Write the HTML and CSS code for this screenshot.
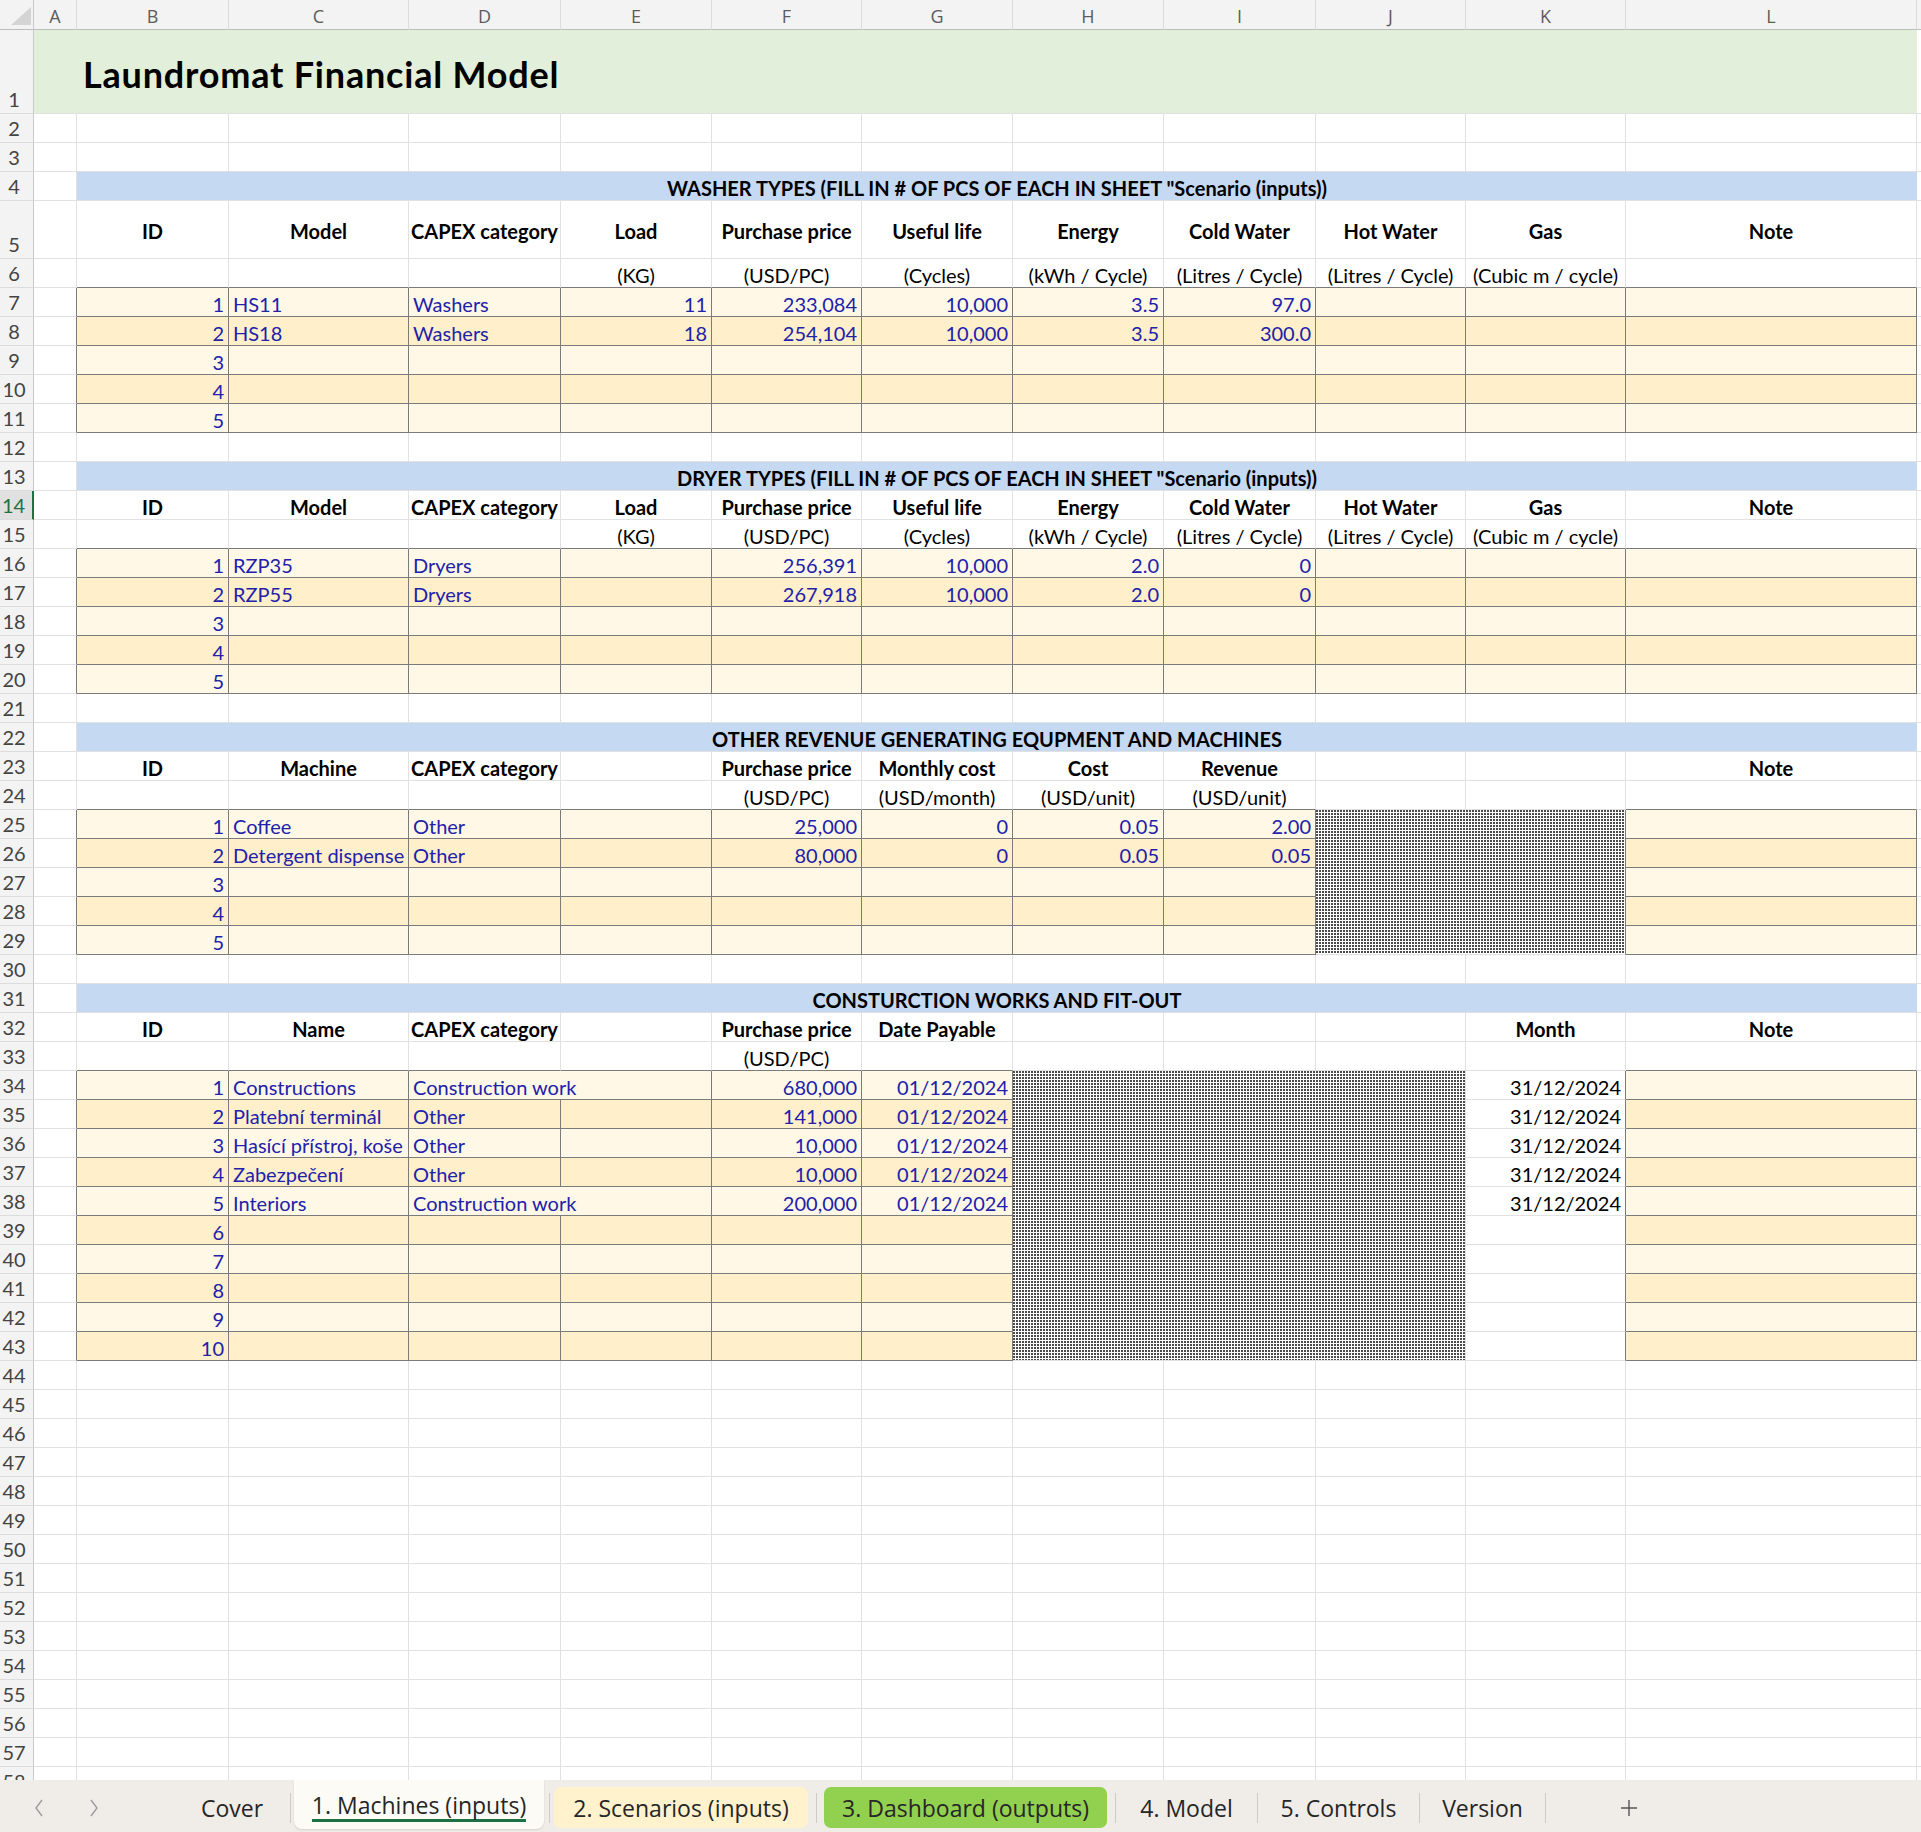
FILE: index.html
```html
<!DOCTYPE html>
<html lang="en">
<head>
    <meta charset="UTF-8">
    <meta name="viewport" content="width=device-width, initial-scale=1.0">
    <title>Laundromat Financial Model</title>
    <link rel="stylesheet" href="styles.css">
</head>
<body>
    <div class="window">
        <div class="sheet-wrap">
            <div class="sheet" id="sheet"></div>
        </div>

        <div class="tabbar">
            <div class="nav">
                <svg width="12" height="20" viewBox="0 0 12 20"><polyline points="9,2 3,10 9,18" fill="none" stroke="#9c9c9c" stroke-width="1.4"/></svg>
                <svg width="12" height="20" viewBox="0 0 12 20"><polyline points="3,2 9,10 3,18" fill="none" stroke="#9c9c9c" stroke-width="1.4"/></svg>
            </div>
            <div class="tab tab-cover">Cover</div>
            <span class="sep"></span>
            <div class="tab tab-active"><span>1. Machines (inputs)</span></div>
            <span class="sep"></span>
            <div class="tab tab-yellow">2. Scenarios (inputs)</div>
            <span class="sep"></span>
            <div class="tab tab-green">3. Dashboard (outputs)</div>
            <span class="sep"></span>
            <div class="tab tab-model">4. Model</div>
            <span class="sep"></span>
            <div class="tab tab-controls">5. Controls</div>
            <span class="sep"></span>
            <div class="tab tab-version">Version</div>
            <span class="sep"></span>
            <div class="add">
                <svg width="20" height="20" viewBox="0 0 20 20"><path d="M10 2v16M2 10h16" stroke="#555" stroke-width="1.4"/></svg>
            </div>
        </div>
    </div>

    <script>
        const COLS = ['A', 'B', 'C', 'D', 'E', 'F', 'G', 'H', 'I', 'J', 'K', 'L'];
        const LAST_ROW = 58;
        const RIGHT = [1, 4, 5, 6, 7, 8, 9, 10];
        const rows = {};

        for (let r = 1; r <= LAST_ROW; r++) {
            rows[r] = COLS.map(() => ({ t: '', c: [] }));
        }

        function title(r, text) {
            rows[r][0] = { t: text, c: ['title', 's12'] };
            for (let i = 1; i < 12; i++) rows[r][i] = null;
        }

        function band(r, text) {
            rows[r][1] = { t: text, c: ['band', 's11'] };
            for (let i = 2; i < 12; i++) rows[r][i] = null;
        }

        function line(r, vals, cls) {
            vals.forEach((v, i) => {
                const cell = rows[r][i + 1];
                if (cell && v) {
                    cell.t = v;
                    cell.c.push(cls);
                }
            });
        }

        function fill(r, vals) {
            vals.forEach((v, i) => {
                const cell = rows[r][i + 1];
                if (cell && v) cell.t = v;
            });
        }

        function block(r, i, w, h, extra) {
            rows[r][i] = { t: '', c: ['hatch', 's' + w, 'rs' + h].concat(extra || []) };
            for (let y = r; y < r + h; y++) {
                for (let x = i; x < i + w; x++) {
                    if (y !== r || x !== i) rows[y][x] = null;
                }
            }
        }

        function table(r1, r2, cols) {
            cols.forEach(i => rows[r1 - 1][i] && rows[r1 - 1][i].c.push('bb'));
            for (let r = r1; r <= r2; r++) {
                rows[r][0].c.push('br');
                cols.forEach(i => {
                    const cell = rows[r][i];
                    if (!cell) return;
                    cell.c.push('br', 'bb', 'in', (r - r1) % 2 ? 'dark' : 'light');
                    if (RIGHT.includes(i)) cell.c.push('r');
                });
            }
        }

        const machineHeads = ['ID', 'Model', 'CAPEX category', 'Load', 'Purchase price', 'Useful life', 'Energy', 'Cold Water', 'Hot Water', 'Gas', 'Note'];
        const machineUnits = ['', '', '', '(KG)', '(USD/PC)', '(Cycles)', '(kWh / Cycle)', '(Litres / Cycle)', '(Litres / Cycle)', '(Cubic m / cycle)', ''];
        const all = [1, 2, 3, 4, 5, 6, 7, 8, 9, 10, 11];

        title(1, 'Laundromat Financial Model');

        // Washers
        band(4, 'WASHER TYPES (FILL IN # OF PCS OF EACH IN SHEET "Scenario (inputs))');
        line(5, machineHeads, 'hd');
        line(6, machineUnits, 'un');
        fill(7, ['1', 'HS11', 'Washers', '11', '233,084', '10,000', '3.5', '97.0']);
        fill(8, ['2', 'HS18', 'Washers', '18', '254,104', '10,000', '3.5', '300.0']);
        fill(9, ['3']);
        fill(10, ['4']);
        fill(11, ['5']);
        table(7, 11, all);

        // Dryers
        band(13, 'DRYER TYPES (FILL IN # OF PCS OF EACH IN SHEET "Scenario (inputs))');
        line(14, machineHeads, 'hd');
        line(15, machineUnits, 'un');
        fill(16, ['1', 'RZP35', 'Dryers', '', '256,391', '10,000', '2.0', '0']);
        fill(17, ['2', 'RZP55', 'Dryers', '', '267,918', '10,000', '2.0', '0']);
        fill(18, ['3']);
        fill(19, ['4']);
        fill(20, ['5']);
        table(16, 20, all);

        // Other equipment
        band(22, 'OTHER REVENUE GENERATING EQUPMENT AND MACHINES');
        line(23, ['ID', 'Machine', 'CAPEX category', '', 'Purchase price', 'Monthly cost', 'Cost', 'Revenue', '', '', 'Note'], 'hd');
        line(24, ['', '', '', '', '(USD/PC)', '(USD/month)', '(USD/unit)', '(USD/unit)'], 'un');
        block(25, 9, 2, 5, ['br']);
        fill(25, ['1', 'Coffee', 'Other', '', '25,000', '0', '0.05', '2.00']);
        fill(26, ['2', 'Detergent dispense', 'Other', '', '80,000', '0', '0.05', '0.05']);
        fill(27, ['3']);
        fill(28, ['4']);
        fill(29, ['5']);
        table(25, 29, [1, 2, 3, 4, 5, 6, 7, 8, 11]);

        // Construction
        band(31, 'CONSTURCTION WORKS AND FIT-OUT');
        line(32, ['ID', 'Name', 'CAPEX category', '', 'Purchase price', 'Date Payable', '', '', '', 'Month', 'Note'], 'hd');
        line(33, ['', '', '', '', '(USD/PC)'], 'un');
        block(34, 7, 3, 10);
        [34, 38].forEach(r => {
            rows[r][3].c.push('s2');
            rows[r][4] = null;
        });
        const works = [
            ['1', 'Constructions', 'Construction work', '', '680,000', '01/12/2024'],
            ['2', 'Platební terminál', 'Other', '', '141,000', '01/12/2024'],
            ['3', 'Hasící přístroj, koše', 'Other', '', '10,000', '01/12/2024'],
            ['4', 'Zabezpečení', 'Other', '', '10,000', '01/12/2024'],
            ['5', 'Interiors', 'Construction work', '', '200,000', '01/12/2024']
        ];
        for (let r = 34; r <= 43; r++) {
            const w = works[r - 34] || [String(r - 33)];
            fill(r, w);
            const month = rows[r][10];
            month.c.push('br', 'r');
            if (r <= 38) month.t = '31/12/2024';
        }
        table(34, 43, [1, 2, 3, 4, 5, 6, 11]);

        // Build the grid
        const sheet = document.getElementById('sheet');

        function add(cls, text) {
            const d = document.createElement('div');
            d.className = cls;
            if (text) d.textContent = text;
            sheet.appendChild(d);
            return d;
        }

        add('corner').innerHTML = '<svg width="34" height="30"><polygon points="31,7 31,25 11,25" fill="#d4d4d4"/></svg>';
        COLS.forEach(c => add('colhead', c));
        add('colhead edge');

        for (let r = 1; r <= LAST_ROW; r++) {
            add('rowhead' + (r === 14 ? ' sel' : ''), String(r));
            rows[r].forEach(cell => {
                if (cell) add('c ' + cell.c.join(' '), cell.t);
            });
            add('c edge');
        }
    </script>
</body>
</html>
```

FILE: styles.css
```css
:root {
    --grid-line: #e1e1e1;
    --table-line: #7b7b7b;
    --input-blue: #2121aa;
    --cream: #fff8e7;
    --cream-dark: #ffefca;
    --band: #c6d9f2;
    --title-green: #e2efda;
}

* {
    box-sizing: border-box;
}

body {
    margin: 0;
    background: #fff;
    font-family: Lato, "Liberation Sans", sans-serif;
    overflow: hidden;
}

.window {
    width: 1921px;
    height: 1832px;
    display: flex;
    flex-direction: column;
}

.sheet-wrap {
    height: 1780px;
    overflow: hidden;
    flex-shrink: 0;
}

.sheet {
    display: grid;
    grid-template-columns: 34px 43px 152px 180px 152px 151px 150px 151px 151px 152px 150px 160px 291px 4px;
    grid-template-rows: 30px 84px 29px 29px 29px 58px;
    grid-auto-rows: 29px;
}

/* headers */

.corner {
    background: #f3f3f3;
    border-right: 1px solid #c9c9c9;
    border-bottom: 1px solid #bdbdbd;
}

.corner svg {
    display: block;
}

.colhead {
    background: #f3f3f3;
    border-right: 1px solid #dcdcdc;
    border-bottom: 1px solid #bdbdbd;
    color: #5c5c5c;
    font-family: "Open Sans", sans-serif;
    font-size: 18px;
    display: flex;
    align-items: center;
    justify-content: center;
    padding-top: 2px;
}

.colhead.edge {
    border-right: 0;
}

.rowhead {
    background: #f3f3f3;
    border-right: 1px solid #c9c9c9;
    border-bottom: 1px solid #dcdcdc;
    color: #444;
    font-size: 20px;
    display: flex;
    align-items: flex-end;
    justify-content: center;
    padding: 0 5px 2px 0;
    white-space: nowrap;
}

.rowhead.sel {
    background: #e0e0e0;
    color: #1e7145;
    border-right: 2px solid #1e7145;
}

/* cells */

.c {
    border-right: 1px solid var(--grid-line);
    border-bottom: 1px solid var(--grid-line);
    display: flex;
    align-items: center;
    padding: 3px 4px 0;
    font-size: 20px;
    color: #000;
    white-space: nowrap;
    overflow: hidden;
    min-width: 0;
}

.c.edge {
    border-right: 0;
}

.c.br {
    border-right-color: var(--table-line);
}

.c.bb {
    border-bottom-color: var(--table-line);
}

.c.in {
    color: var(--input-blue);
}

.c.light {
    background: var(--cream);
}

.c.dark {
    background: var(--cream-dark);
}

.c.r {
    justify-content: flex-end;
}

.hd {
    font-weight: 700;
    justify-content: center;
}

.un {
    justify-content: center;
}

.title {
    background: var(--title-green);
    font-size: 36px;
    font-weight: 700;
    letter-spacing: 0.8px;
    padding: 5px 0 0 49px;
    border-right: 0;
}

.band {
    background: var(--band);
    font-weight: 700;
    justify-content: center;
    border-right: 0;
}

.hatch {
    background-color: #fff;
    background-image: conic-gradient(at 2px 2px, transparent 75%, #4a4a4a 0);
    background-size: 3px 3px;
}

.s2 { grid-column: span 2; }
.s3 { grid-column: span 3; }
.s11 { grid-column: span 11; }
.s12 { grid-column: span 12; }
.rs5 { grid-row: span 5; }
.rs10 { grid-row: span 10; }

/* sheet tabs */

.tabbar {
    height: 52px;
    background: #f0ece8;
    display: flex;
    align-items: flex-start;
    padding-top: 7px;
    font-family: "Open Sans", sans-serif;
    font-size: 23px;
    color: #262626;
}

.nav {
    width: 174px;
    height: 41px;
    display: flex;
    align-items: center;
    gap: 43px;
    padding-left: 33px;
}

.nav svg {
    display: block;
}

.tab {
    height: 41px;
    display: flex;
    align-items: center;
    justify-content: center;
    white-space: nowrap;
    border-radius: 7px;
}

.sep {
    width: 1px;
    height: 30px;
    margin-top: 6px;
    background: #cfcac5;
}

.tab-cover { width: 116px; }

.tab-active {
    width: 250px;
    height: 49px;
    margin: -7px 5px 0 3px;
    padding-top: 4px;
    background: #fdfbf5;
    border-radius: 0 0 8px 8px;
    box-shadow: 0 1px 2px rgba(0, 0, 0, 0.12);
}

.tab-active span {
    border-bottom: 3px solid #1e7145;
    line-height: 1.25;
}

.tab-yellow {
    width: 254px;
    margin: 0 8px 0 4px;
    background: #fff2cc;
}

.tab-green {
    width: 283px;
    margin: 0 8px 0 7px;
    background: #92d050;
}

.tab-model { width: 141px; }
.tab-controls { width: 161px; }
.tab-version { width: 125px; }

.add {
    height: 41px;
    margin-left: 73px;
    display: flex;
    align-items: center;
}

.add svg {
    display: block;
}
```
